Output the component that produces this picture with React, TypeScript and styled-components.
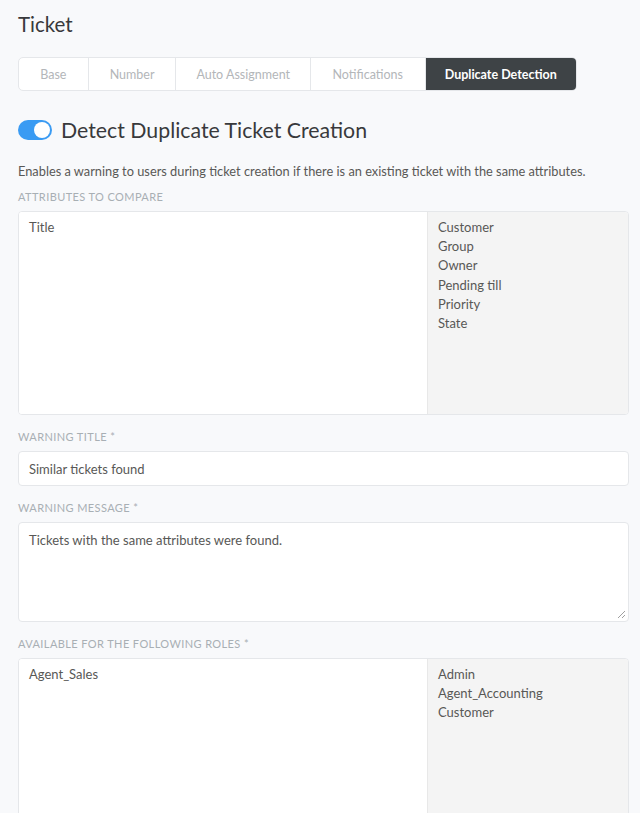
import React from 'react'
import styled, { createGlobalStyle } from 'styled-components'

const GlobalStyle = createGlobalStyle`
  html, body {
    margin: 0;
    padding: 0;
    background: #f8f9fb;
  }
  body {
    font-family: 'Lato', 'Noto Sans', sans-serif;
    color: #585856;
  }
  * {
    box-sizing: border-box;
  }
`

const Page = styled.div`
  padding: 10px 11px 0 18px;
  height: 813px;
  overflow: hidden;
`

const PageTitle = styled.h1`
  margin: 0;
  font-size: 20.5px;
  font-weight: 400;
  line-height: 28px;
  color: #38393c;
`

const Tabs = styled.div`
  display: flex;
  margin-top: 19px;
  width: 559px;
  height: 34px;
  border: 1px solid #e5e7ea;
  border-radius: 5px;
  background: #ffffff;
  overflow: hidden;
`

const Tab = styled.div<{ $active?: boolean; $first?: boolean; $w: number }>`
  width: ${(p) => p.$w}px;
  display: flex;
  align-items: center;
  justify-content: center;
  font-size: 12.5px;
  font-weight: ${(p) => (p.$active ? 700 : 400)};
  color: ${(p) => (p.$active ? '#ffffff' : '#b3b6b9')};
  background: ${(p) => (p.$active ? '#3e4346' : 'transparent')};
  border-left: ${(p) => (p.$first ? 'none' : '1px solid #e5e7ea')};
`

const ToggleRow = styled.div`
  display: flex;
  align-items: center;
  gap: 9px;
  margin-top: 24px;
`

const Switch = styled.div`
  position: relative;
  width: 34px;
  height: 20px;
  border-radius: 10px;
  background: #3a9bf3;
`

const Knob = styled.span`
  position: absolute;
  right: 2px;
  top: 2px;
  width: 16px;
  height: 16px;
  border-radius: 50%;
  background: #ffffff;
`

const Heading = styled.h2`
  margin: 0;
  font-size: 21.3px;
  font-weight: 400;
  color: #38393c;
  line-height: 30px;
`

const Description = styled.p`
  margin: 16px 0 0;
  font-size: 12.8px;
  line-height: 20px;
`

const Label = styled.div`
  font-size: 11px;
  line-height: 14px;
  letter-spacing: 0.4px;
  text-transform: uppercase;
  color: #a8afb4;
`

const Field = styled.div`
  margin-top: 7px;
`

const ColumnSelect = styled.div<{ $h: number }>`
  display: flex;
  height: ${(p) => p.$h}px;
  border: 1px solid #e5e7ea;
  border-radius: 4px;
  overflow: hidden;
  background: #ffffff;
`

const Column = styled.div<{ $muted?: boolean }>`
  flex: ${(p) => (p.$muted ? '0 0 201px' : '1')};
  padding: 6px 10px;
  background: ${(p) => (p.$muted ? '#f4f4f4' : '#ffffff')};
  border-left: ${(p) => (p.$muted ? '1px solid #e8e8e8' : 'none')};
`

const Option = styled.div`
  font-size: 13px;
  line-height: 19.2px;
  color: #585856;
`

const Input = styled.div`
  height: 35px;
  padding: 0 10px;
  display: flex;
  align-items: center;
  font-size: 13px;
  border: 1px solid #e5e7ea;
  border-radius: 4px;
  background: #ffffff;
`

const TextArea = styled.div`
  position: relative;
  height: 100px;
  padding: 8px 10px;
  font-size: 13px;
  line-height: 18px;
  border: 1px solid #e5e7ea;
  border-radius: 4px;
  background: #ffffff;
`

const Grip = styled.svg`
  position: absolute;
  right: 2px;
  bottom: 2px;
`

const Group = styled.div<{ $gap: number }>`
  margin-top: ${(p) => p.$gap}px;
`

const tabs = [
  { label: 'Base', w: 69 },
  { label: 'Number', w: 88 },
  { label: 'Auto Assignment', w: 135 },
  { label: 'Notifications', w: 115 },
  { label: 'Duplicate Detection', w: 152, active: true },
]

export default function App() {
  return (
    <>
      <GlobalStyle />
      <Page>
        <PageTitle>Ticket</PageTitle>
        <Tabs>
          {tabs.map((t, i) => (
            <Tab key={t.label} $w={t.w} $active={t.active} $first={i === 0}>
              {t.label}
            </Tab>
          ))}
        </Tabs>

        <ToggleRow>
          <Switch>
            <Knob />
          </Switch>
          <Heading>Detect Duplicate Ticket Creation</Heading>
        </ToggleRow>

        <Description>
          Enables a warning to users during ticket creation if there is an existing ticket with the same attributes.
        </Description>

        <Group $gap={9}>
          <Label>Attributes to compare</Label>
          <Field>
            <ColumnSelect $h={204}>
              <Column>
                <Option>Title</Option>
              </Column>
              <Column $muted>
                <Option>Customer</Option>
                <Option>Group</Option>
                <Option>Owner</Option>
                <Option>Pending till</Option>
                <Option>Priority</Option>
                <Option>State</Option>
              </Column>
            </ColumnSelect>
          </Field>
        </Group>

        <Group $gap={15}>
          <Label>Warning title *</Label>
          <Field>
            <Input>Similar tickets found</Input>
          </Field>
        </Group>

        <Group $gap={15}>
          <Label>Warning message *</Label>
          <Field>
            <TextArea>
              Tickets with the same attributes were found.
              <Grip width="9" height="9" viewBox="0 0 9 9">
                <path d="M8 1 L1 8 M8 5 L5 8" stroke="#a0a0a0" strokeWidth="1" />
              </Grip>
            </TextArea>
          </Field>
        </Group>

        <Group $gap={15}>
          <Label>Available for the following roles *</Label>
          <Field>
            <ColumnSelect $h={204}>
              <Column>
                <Option>Agent_Sales</Option>
              </Column>
              <Column $muted>
                <Option>Admin</Option>
                <Option>Agent_Accounting</Option>
                <Option>Customer</Option>
              </Column>
            </ColumnSelect>
          </Field>
        </Group>
      </Page>
    </>
  )
}
